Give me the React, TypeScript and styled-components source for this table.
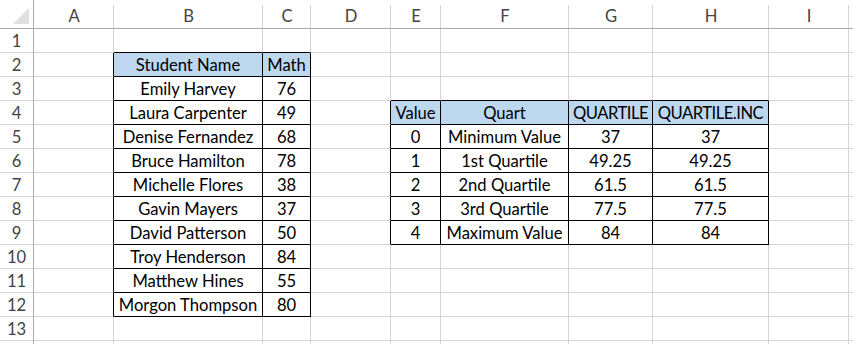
import styled, { createGlobalStyle } from 'styled-components'

const GlobalStyle = createGlobalStyle`
  html, body {
    margin: 0;
    padding: 0;
    background: #fff;
  }
  body {
    font-family: Lato, 'Liberation Sans', sans-serif;
    overflow: hidden;
  }
`

const GRID = '#d4d4d4'
const HEADER_LINE = '#ababab'
const INK = '#000'
const HEADER_FILL = '#bdd7ee'

// J only peeks in at the right edge, so it carries no label
const columns = [
  { key: 'A', width: 80 },
  { key: 'B', width: 149 },
  { key: 'C', width: 48 },
  { key: 'D', width: 80 },
  { key: 'E', width: 50 },
  { key: 'F', width: 128 },
  { key: 'G', width: 84 },
  { key: 'H', width: 116 },
  { key: 'I', width: 80 },
  { key: 'J', width: 80, hidden: true },
]

const rowCount = 14
const labelledRows = 13

// rectangles that get a thin black outline around every cell
const tables = [
  { top: 2, bottom: 12, left: 1, right: 2 },
  { top: 4, bottom: 9, left: 4, right: 7 },
]

const headerCells = ['B2', 'C2', 'E4', 'F4', 'G4', 'H4']

const students = [
  ['Emily Harvey', '76'],
  ['Laura Carpenter', '49'],
  ['Denise Fernandez', '68'],
  ['Bruce Hamilton', '78'],
  ['Michelle Flores', '38'],
  ['Gavin Mayers', '37'],
  ['David Patterson', '50'],
  ['Troy Henderson', '84'],
  ['Matthew Hines', '55'],
  ['Morgon Thompson', '80'],
]

const quartiles = [
  ['0', 'Minimum Value', '37', '37'],
  ['1', '1st Quartile', '49.25', '49.25'],
  ['2', '2nd Quartile', '61.5', '61.5'],
  ['3', '3rd Quartile', '77.5', '77.5'],
  ['4', 'Maximum Value', '84', '84'],
]

const values: Record<string, string> = {
  B2: 'Student Name',
  C2: 'Math',
  E4: 'Value',
  F4: 'Quart',
  G4: 'QUARTILE',
  H4: 'QUARTILE.INC',
}
students.forEach(([name, score], i) => {
  values[`B${i + 3}`] = name
  values[`C${i + 3}`] = score
})
quartiles.forEach((row, i) => {
  ;['E', 'F', 'G', 'H'].forEach((col, j) => {
    values[`${col}${i + 5}`] = row[j]
  })
})

const inTable = (row: number, col: number) =>
  tables.some(t => row >= t.top && row <= t.bottom && col >= t.left && col <= t.right)

// all-caps labels run wide in this face, pull them in a little
const isCaps = (text?: string) => !!text && /^[A-Z.]{4,}$/.test(text)

const Sheet = styled.div`
  display: grid;
  grid-template-columns: 34px ${columns.map(c => `${c.width}px`).join(' ')};
  grid-template-rows: 29px repeat(${rowCount}, 24px);
  width: 853px;
  height: 344px;
  overflow: hidden;
  font-size: 16.6px;
  color: #000;
`

const Corner = styled.div`
  border-right: 1px solid ${HEADER_LINE};
  border-bottom: 1px solid ${HEADER_LINE};
  display: flex;
  align-items: flex-end;
  justify-content: flex-end;
  padding: 0 3px 3px 0;
`

const ColHeader = styled.div`
  border-bottom: 1px solid ${HEADER_LINE};
  background-image: linear-gradient(${GRID}, ${GRID});
  background-size: 1px calc(100% - 5px);
  background-position: right bottom;
  background-repeat: no-repeat;
  display: flex;
  align-items: center;
  justify-content: center;
  padding-top: 3px;
  color: #444;
`

const RowHeader = styled.div`
  border-right: 1px solid ${HEADER_LINE};
  border-bottom: 1px solid ${GRID};
  display: flex;
  align-items: flex-end;
  justify-content: center;
  padding-bottom: 1px;
  color: #444;
`

const Cell = styled.div<{ $fill?: string; $right: string; $bottom: string; $caps?: boolean }>`
  background: ${p => p.$fill || '#fff'};
  border-right: 1px solid ${p => p.$right};
  border-bottom: 1px solid ${p => p.$bottom};
  display: flex;
  align-items: flex-end;
  justify-content: center;
  padding-bottom: 1px;
  white-space: nowrap;
  letter-spacing: ${p => (p.$caps ? '-0.5px' : 'normal')};
`

export default function App() {
  const rows = Array.from({ length: rowCount }, (_, i) => i + 1)

  return (
    <>
      <GlobalStyle />
      <Sheet>
        <Corner>
          <svg width="17" height="17" viewBox="0 0 17 17">
            <polygon points="16,0 16,16 0,16" fill="#dfdfdf" />
          </svg>
        </Corner>
        {columns.map(c => (
          <ColHeader key={c.key}>{c.hidden ? '' : c.key}</ColHeader>
        ))}
        {rows.map(r => [
          <RowHeader key={`h${r}`}>{r <= labelledRows ? r : ''}</RowHeader>,
          ...columns.map((c, ci) => {
            const id = `${c.key}${r}`
            const here = inTable(r, ci)
            const right = here || inTable(r, ci + 1) ? INK : GRID
            const bottom = here || inTable(r + 1, ci) ? INK : GRID
            return (
              <Cell
                key={id}
                $fill={headerCells.includes(id) ? HEADER_FILL : undefined}
                $right={right}
                $bottom={bottom}
                $caps={isCaps(values[id])}
              >
                {values[id]}
              </Cell>
            )
          }),
        ])}
      </Sheet>
    </>
  )
}
